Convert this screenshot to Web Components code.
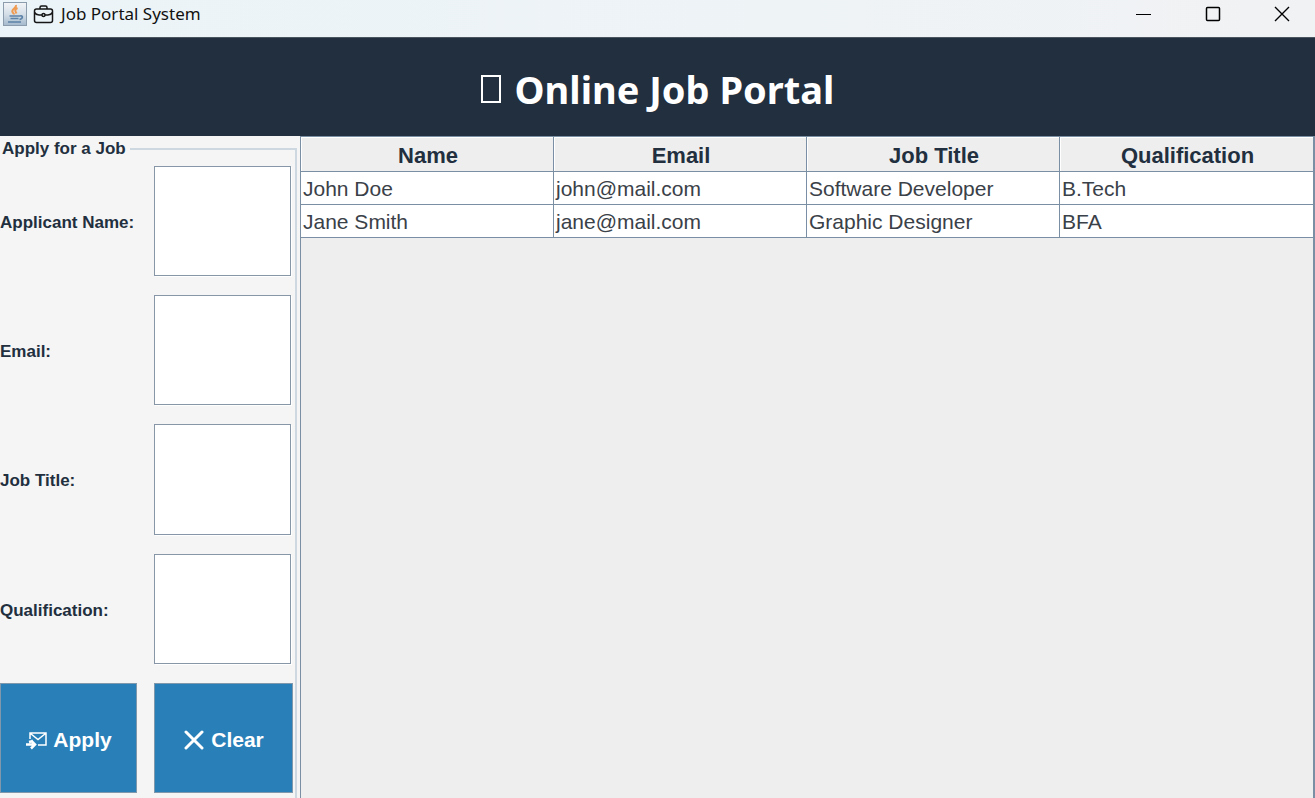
<!DOCTYPE html>
<html lang="en">
<head>
<meta charset="utf-8">
<title>Job Portal System</title>
<style>
  html, body { margin: 0; height: 100%; }
  body { font-family: "Liberation Sans", Arial, sans-serif; color: #222f3e; background: #eeeeee; }
</style>
</head>
<body>
<job-portal-app></job-portal-app>

<template id="app-tpl">
  <style>
    :host { display: flex; flex-direction: column; min-height: 100vh; }
    main { flex: 1; display: grid; grid-template-columns: 300px minmax(0, 1fr); }
  </style>
  <window-bar>Job Portal System</window-bar>
  <portal-header>Online Job Portal</portal-header>
  <main>
    <application-form legend="Apply for a Job"></application-form>
    <applicant-table></applicant-table>
  </main>
</template>

<template id="bar-tpl">
  <style>
    :host { display: flex; align-items: flex-start; height: 37px; background: linear-gradient(90deg, #ebf4f8, #eef3f6 60%, #f1f2f4); color: #111; font: 17px/26px "Noto Sans", sans-serif; }
    .title { display: flex; align-items: center; gap: 6px; padding-left: 3px; flex: 1; height: 27px; }
    .title span { padding-left: 1px; }
    .controls { display: flex; }
    button { width: 70px; height: 27px; padding: 0; border: 0; background: none; color: #000; display: grid; place-items: center; }
    button:last-child { width: 67px; }
    svg { display: block; }
  </style>
  <div class="title">
    <svg width="24" height="24" viewBox="0 0 24 24" aria-hidden="true">
      <defs><linearGradient id="g" x1="0" y1="0" x2="0" y2="1"><stop offset="0" stop-color="#f3f5f7"/><stop offset=".5" stop-color="#d5dfe8"/><stop offset="1" stop-color="#a3b9cd"/></linearGradient></defs>
      <rect x=".5" y=".5" width="23" height="23" fill="url(#g)" stroke="#8b9cad"/>
      <path d="M13 3c1 3-5 4-3.500 7 .3 1 1.500 1.500 1.500 2.500M14.500 6c-3 1.500-2.500 3-1 5.500" fill="none" stroke="#f09a50" stroke-width="2"/>
      <path d="M6.500 14h10.500M7.500 16.500h8M5 20h13M17 14c3-1 3.500 2.500-.5 3.500" fill="none" stroke="#5d83a8" stroke-width="1.700"/>
    </svg>
    <svg width="21" height="20" viewBox="0 0 21 20" fill="none" stroke="#161616" stroke-width="1.500" aria-hidden="true">
      <rect x="1.500" y="5" width="18" height="13.500" rx="2"/>
      <path d="M7 5V3.500Q7 2 8.500 2h4Q14 2 14 3.500V5M1.500 8.500Q3 11 6 11h3M12 11h3q3 0 4.500-2.500"/>
      <circle cx="10.500" cy="11" r="1.500"/>
    </svg>
    <span><slot></slot></span>
  </div>
  <div class="controls">
    <button type="button" aria-label="Minimize"><svg width="16" height="16" viewBox="0 0 16 16"><path d="M1 8.500h15" stroke="#000"/></svg></button>
    <button type="button" aria-label="Maximize"><svg width="16" height="16" viewBox="0 0 16 16"><rect x="1.500" y="1.500" width="13" height="13" rx="1" fill="none" stroke="#000" stroke-width="1.500"/></svg></button>
    <button type="button" aria-label="Close"><svg width="16" height="16" viewBox="0 0 16 16"><path d="M1 1l14 14M15 1L1 15" stroke="#000" stroke-width="1.400"/></svg></button>
  </div>
</template>

<template id="header-tpl">
  <style>
    :host { display: block; background: #222f3e; color: #fff; border-top: 1px solid #4a5560; }
    h1 { margin: 0; padding: 23px 0 19px; display: flex; justify-content: center; align-items: center; gap: 14px; font: bold 38px/56px "Noto Sans", sans-serif; }
    i { box-sizing: border-box; width: 20px; height: 28px; border: 2px solid #fff; }
  </style>
  <h1><i aria-hidden="true"></i><span><slot></slot></span></h1>
</template>

<template id="form-tpl">
  <style>
    :host { display: flex; background: #f5f5f5; padding: 2px 3px 0 0; }
    form { flex: 1; display: flex; }
    fieldset { flex: 1; min-width: 0; margin: 0; border: 0 solid #cdd8e0; border-width: 2px 2px 0 0; padding: 6px 2px 5px 0; display: grid; grid-template-columns: minmax(0, 137fr) minmax(0, 139fr); grid-template-rows: repeat(5, minmax(0, 1fr)); column-gap: 17px; row-gap: 19px; }
    legend { padding: 0 4px 0 2px; font: bold 17px/22px "Liberation Sans", Arial, sans-serif; }
    form-field { display: contents; }
  </style>
  <form>
    <fieldset>
      <legend></legend>
      <form-field label="Applicant Name:" name="name"></form-field>
      <form-field label="Email:" name="email"></form-field>
      <form-field label="Job Title:" name="job"></form-field>
      <form-field label="Qualification:" name="qualification"></form-field>
      <action-button>
        <svg slot="icon" width="22" height="20" viewBox="0 0 22 20" fill="none" stroke="#fff" stroke-width="1.500" aria-hidden="true"><path d="M5 9V3h16v12h-8M5.500 3.500L13 9.500l7.500-6"/><path d="M4 12l4-1M1 14.500h8M6 10.500l4 4-4 4" stroke-width="2.500"/></svg>Apply
      </action-button>
      <action-button>
        <svg slot="icon" width="22" height="20" viewBox="0 0 22 20" fill="none" stroke="#fff" stroke-width="3" stroke-linecap="round" aria-hidden="true"><path d="M3 2l16 16M19 2L3 18"/></svg>Clear
      </action-button>
    </fieldset>
  </form>
</template>

<template id="field-tpl">
  <style>
    :host { display: contents; }
    label { align-self: center; padding-top: 4px; white-space: nowrap; font: bold 17px/22px "Liberation Sans", Arial, sans-serif; }
    input { box-sizing: border-box; width: auto; min-width: 0; margin: 0 2px 0 0; padding: 0 4px; border: 1px solid #8797a7; border-radius: 0; background: #fff; box-shadow: 1px 1px #fff; font: 17px "Liberation Sans", Arial, sans-serif; }
  </style>
  <label for="f"></label><input id="f" type="text">
</template>

<template id="button-tpl">
  <style>
    :host { display: grid; }
    button { margin: 0; padding: 4px 0 0; border: 1px solid #7f98ab; border-radius: 0; background: #2980b9; color: #fff; display: flex; align-items: center; justify-content: center; gap: 6px; font: bold 21px/26px "Liberation Sans", Arial, sans-serif; }
  </style>
  <button type="button"><slot name="icon"></slot><span><slot></slot></span></button>
</template>

<template id="table-tpl">
  <style>
    :host { display: block; background: #eeeeee; border: 1px solid #7a8fa4; border-width: 1px 2px 0 1px; }
    table { width: 100%; table-layout: fixed; border-collapse: separate; border-spacing: 0; }
    th, td { box-sizing: border-box; border: 0 solid #7a8fa4; border-width: 0 1px 1px 0; text-align: left; white-space: nowrap; font: 21px/30px "Liberation Sans", Arial, sans-serif; padding: 2px 0 0 2px; }
    th { background: #eeeeee; text-align: center; font-weight: bold; font-size: 22px; padding-top: 4px; box-shadow: inset 1px 1px #fff; }
    td { background: #fff; color: #3a4148; }
    th:last-child, td:last-child { border-right: 0; }
  </style>
  <table>
    <thead><tr></tr></thead>
    <tbody></tbody>
  </table>
</template>

<script>
  class TemplateElement extends HTMLElement {
    constructor() {
      super();
      this.attachShadow({ mode: "open" })
        .append(document.getElementById(this.constructor.tpl).content.cloneNode(true));
    }
  }
  class WindowBar extends TemplateElement { static tpl = "bar-tpl"; }
  class PortalHeader extends TemplateElement { static tpl = "header-tpl"; }
  class ActionButton extends TemplateElement { static tpl = "button-tpl"; }
  class FormField extends TemplateElement {
    static tpl = "field-tpl";
    connectedCallback() {
      this.shadowRoot.querySelector("label").textContent = this.getAttribute("label");
      this.shadowRoot.querySelector("input").name = this.getAttribute("name");
    }
  }
  class ApplicationForm extends TemplateElement {
    static tpl = "form-tpl";
    connectedCallback() {
      this.shadowRoot.querySelector("legend").textContent = this.getAttribute("legend");
    }
  }
  class ApplicantTable extends TemplateElement {
    static tpl = "table-tpl";
    connectedCallback() {
      const cell = (tag, text) => Object.assign(document.createElement(tag), { textContent: text });
      this.shadowRoot.querySelector("thead tr")
        .replaceChildren(...["Name", "Email", "Job Title", "Qualification"].map(t => cell("th", t)));
      const rows = [
        ["John Doe", "john@mail.com", "Software Developer", "B.Tech"],
        ["Jane Smith", "jane@mail.com", "Graphic Designer", "BFA"]
      ].map(r => {
        const tr = document.createElement("tr");
        tr.append(...r.map(t => cell("td", t)));
        return tr;
      });
      this.shadowRoot.querySelector("tbody").replaceChildren(...rows);
    }
  }
  class JobPortalApp extends TemplateElement { static tpl = "app-tpl"; }

  customElements.define("window-bar", WindowBar);
  customElements.define("portal-header", PortalHeader);
  customElements.define("action-button", ActionButton);
  customElements.define("form-field", FormField);
  customElements.define("application-form", ApplicationForm);
  customElements.define("applicant-table", ApplicantTable);
  customElements.define("job-portal-app", JobPortalApp);
</script>
</body>
</html>
